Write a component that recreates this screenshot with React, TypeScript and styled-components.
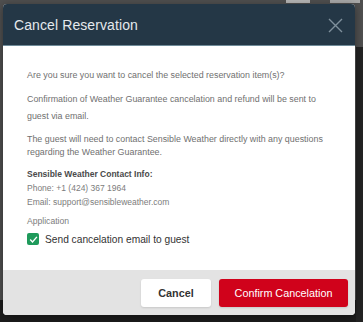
import React from "react";
import styled, { createGlobalStyle } from "styled-components";

const Global = createGlobalStyle`
  html, body { margin: 0; padding: 0; }
  body { font-family: "Liberation Sans", Arial, sans-serif; }
  * { box-sizing: border-box; }
`;

const Page = styled.div`
  width: 363px;
  height: 322px;
  overflow: hidden;
  padding: 4px 0 0 3px;
  background:
    linear-gradient(#b5b5b5, #b5b5b5) 286px 0 / 24px 3px no-repeat,
    linear-gradient(#a8a8a8, #a8a8a8) 330px 0 / 30px 3px no-repeat,
    linear-gradient(#232323, #232323) right 0 top 47px / 7px 100% no-repeat,
    linear-gradient(#4f4f4f 0, #4f4f4f 300px, #1c1c1c 300px);
`;

const Modal = styled.div`
  width: 352px;
  height: 311px;
  display: flex;
  flex-direction: column;
  border-radius: 4px;
  overflow: hidden;
  background: #ffffff;
  box-shadow: 0 2px 8px rgba(0, 0, 0, 0.4);
`;

const Header = styled.div`
  height: 42px;
  flex: none;
  display: flex;
  align-items: center;
  justify-content: space-between;
  padding: 0 12px 0 11px;
  background: #243746;
  border-bottom: 1px solid #6f8b99;
`;

const Title = styled.h2`
  margin: 0;
  font-size: 14px;
  font-weight: 400;
  color: #e4e9ed;
  letter-spacing: 0.1px;
`;

const CloseButton = styled.button`
  width: 16px;
  height: 16px;
  padding: 0;
  border: 0;
  background: none;
  display: flex;
  align-items: center;
  justify-content: center;
  margin-top: 2px;
`;

const Body = styled.div`
  flex: 1;
  padding: 23px 24px 0;
  display: flex;
  flex-direction: column;
`;

const Para = styled.p<{ $lh: number; $mb: number }>`
  margin: 0 0 ${(p) => p.$mb}px;
  font-size: 8.9px;
  line-height: ${(p) => p.$lh}px;
  color: #707070;
`;

const ContactTitle = styled.div`
  font-size: 8.5px;
  line-height: 14px;
  font-weight: 700;
  color: #4a4a4a;
`;

const ContactLine = styled.div`
  font-size: 8.5px;
  line-height: 14px;
  color: #7c7c7c;
`;

const SectionLabel = styled.div`
  margin-top: 6px;
  font-size: 8.6px;
  line-height: 13px;
  color: #7c7c7c;
`;

const CheckRow = styled.label`
  margin-top: 4px;
  display: flex;
  align-items: center;
  gap: 6px;
  height: 14px;
`;

const Box = styled.span`
  width: 12px;
  height: 12px;
  border-radius: 2px;
  background: #1f9a5b;
  display: flex;
  align-items: center;
  justify-content: center;
`;

const CheckLabel = styled.span`
  font-size: 10.2px;
  color: #333333;
`;

const Footer = styled.div`
  height: 45px;
  flex: none;
  background: #e3e3e3;
  display: flex;
  justify-content: flex-end;
  align-items: center;
  gap: 8px;
  padding: 0 7px;
`;

const Button = styled.button<{ $primary?: boolean }>`
  height: 28px;
  width: ${(p) => (p.$primary ? 129 : 70)}px;
  border: 0;
  border-radius: 3px;
  font-family: "Liberation Sans", Arial, sans-serif;
  font-size: 10.8px;
  font-weight: ${(p) => (p.$primary ? 400 : 700)};
  color: ${(p) => (p.$primary ? "#ffffff" : "#333333")};
  background: ${(p) => (p.$primary ? "#d0021b" : "#ffffff")};
  box-shadow: 0 1px 2px rgba(0, 0, 0, 0.12);
  padding: 0;
`;

export default function App() {
  return (
    <>
      <Global />
      <Page>
        <Modal>
          <Header>
            <Title>Cancel Reservation</Title>
            <CloseButton aria-label="Close">
              <svg width="15" height="15" viewBox="0 0 15 15">
                <path d="M1 1 L14 14 M14 1 L1 14" stroke="#7f909c" strokeWidth="1.4" fill="none" />
              </svg>
            </CloseButton>
          </Header>
          <Body>
            <Para $lh={13} $mb={9}>
              Are you sure you want to cancel the selected reservation item(s)?
            </Para>
            <Para $lh={17} $mb={8}>
              Confirmation of Weather Guarantee cancelation and refund will be sent to guest via email.
            </Para>
            <Para $lh={13} $mb={8}>
              The guest will need to contact Sensible Weather directly with any questions regarding the Weather Guarantee.
            </Para>
            <ContactTitle>Sensible Weather Contact Info:</ContactTitle>
            <ContactLine>Phone: +1 (424) 367 1964</ContactLine>
            <ContactLine>Email: support@sensibleweather.com</ContactLine>
            <SectionLabel>Application</SectionLabel>
            <CheckRow>
              <Box>
                <svg width="9" height="9" viewBox="0 0 9 9">
                  <path d="M1.2 4.6 L3.5 6.9 L7.9 1.9" stroke="#ffffff" strokeWidth="1.4" fill="none" />
                </svg>
              </Box>
              <CheckLabel>Send cancelation email to guest</CheckLabel>
            </CheckRow>
          </Body>
          <Footer>
            <Button>Cancel</Button>
            <Button $primary>Confirm Cancelation</Button>
          </Footer>
        </Modal>
      </Page>
    </>
  );
}
